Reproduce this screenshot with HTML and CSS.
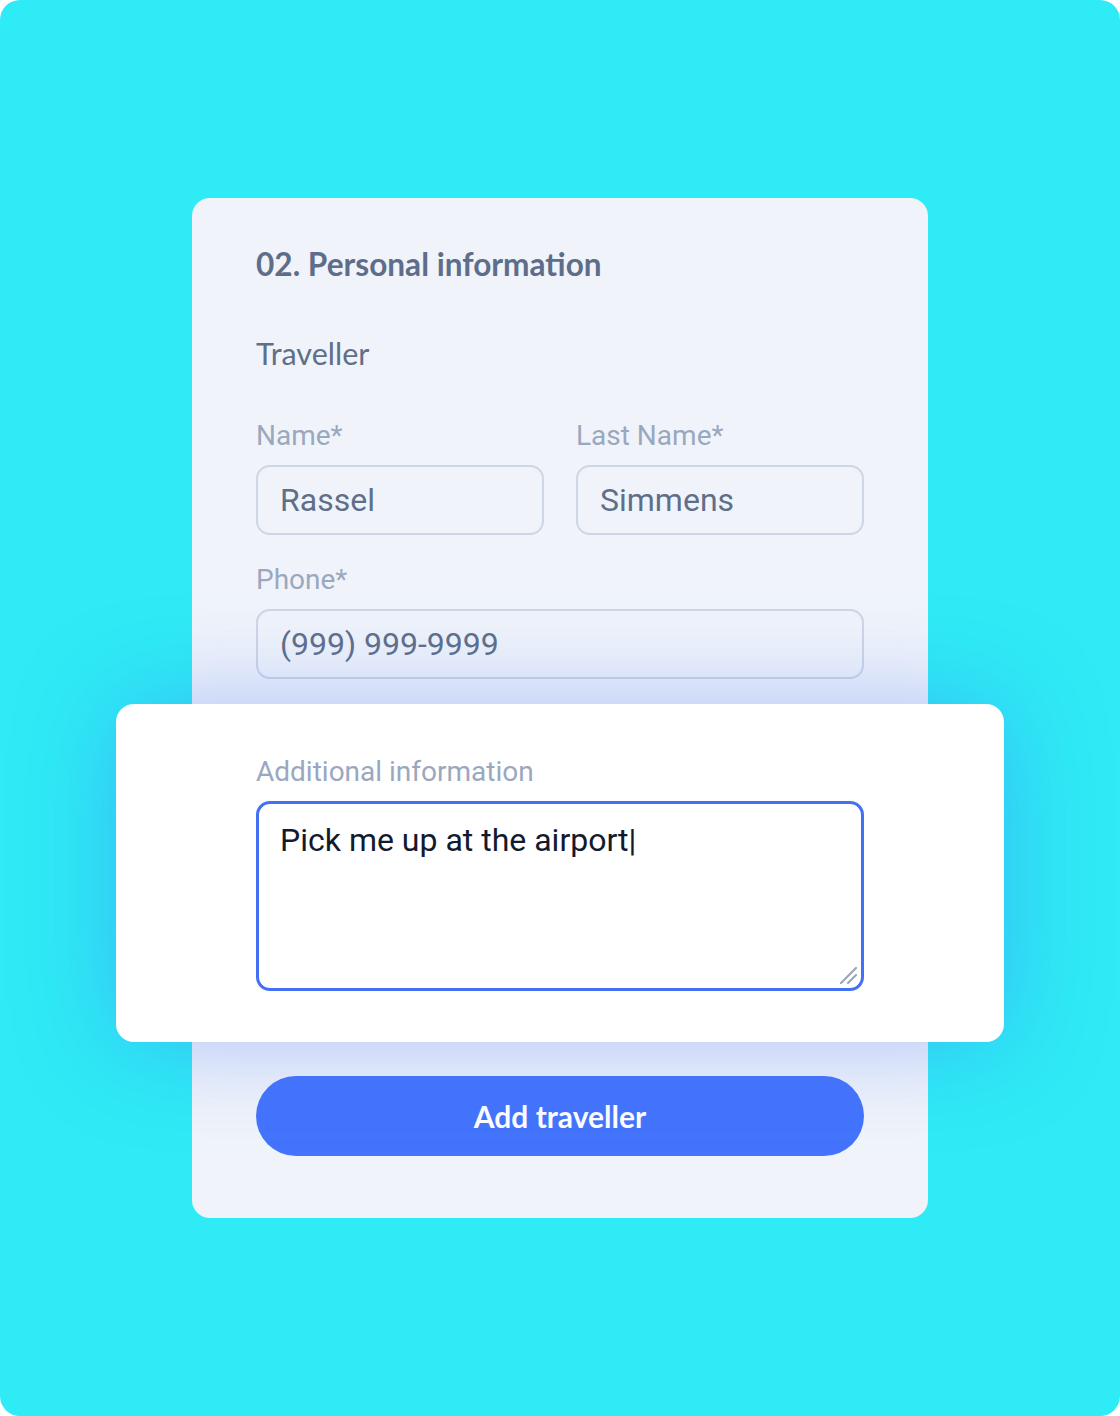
FILE: index.html
```html
<!DOCTYPE html>
<html lang="en">
<head>
<meta charset="utf-8">
<title>Personal information</title>
<link rel="stylesheet" href="styles.css">
</head>
<body>
<div class="stage">
  <form class="card">
    <h2 class="title">02. Personal information</h2>
    <h3 class="subtitle">Traveller</h3>
    <div class="row">
      <label class="field">
        <span class="label">Name*</span>
        <input class="input" type="text" value="Rassel">
      </label>
      <label class="field">
        <span class="label">Last Name*</span>
        <input class="input" type="text" value="Simmens">
      </label>
    </div>
    <label class="field field-phone">
      <span class="label">Phone*</span>
      <input class="input" type="text" value="(999) 999-9999">
    </label>
    <div class="focus-panel">
      <label class="field">
        <span class="label">Additional information</span>
        <span class="textarea-wrap">
          <textarea class="textarea">Pick me up at the airport|</textarea>
          <svg class="grip" width="20" height="20" viewBox="0 0 20 20" aria-hidden="true">
            <line x1="3" y1="18" x2="18" y2="3" stroke="#9aa6b8" stroke-width="2.2" stroke-linecap="round"/>
            <line x1="10" y1="18" x2="18" y2="10" stroke="#9aa6b8" stroke-width="2.2" stroke-linecap="round"/>
          </svg>
        </span>
      </label>
    </div>
    <button class="btn" type="button">Add traveller</button>
  </form>
</div>
</body>
</html>
```
FILE: styles.css
```css
* { box-sizing: border-box; }
html, body { margin: 0; padding: 0; background: #ffffff; }
.stage {
  width: 1120px;
  height: 1416px;
  background: #2eebf5;
  border-radius: 20px;
  display: flex;
  align-items: center;
  justify-content: center;
}
.card {
  width: 736px;
  height: 1020px;
  background: #f0f4fa;
  border-radius: 18px;
  padding: 46px 64px 62px;
  display: flex;
  flex-direction: column;
}
.title {
  margin: 0;
  font-family: Lato, "Open Sans", sans-serif;
  font-weight: 700;
  font-size: 31.6px;
  line-height: 40px;
  color: #5e6e8a;
}
.subtitle {
  margin: 51px 0 0;
  font-family: Lato, "Open Sans", sans-serif;
  font-weight: 400;
  font-size: 30.5px;
  line-height: 36px;
  color: #5f6f89;
}
.row {
  margin-top: 50px;
  display: grid;
  grid-template-columns: 1fr 1fr;
  gap: 32px;
}
.field {
  display: flex;
  flex-direction: column;
  gap: 14px;
}
.field-phone { margin-top: 30px; }
.label {
  font-family: Roboto, "Liberation Sans", sans-serif;
  font-size: 28px;
  line-height: 30px;
  color: #9aa8bf;
}
.input {
  height: 70px;
  width: 100%;
  border: 2px solid #cdd6e4;
  border-radius: 14px;
  background: transparent;
  padding: 0 22px;
  font-family: Roboto, "Liberation Sans", sans-serif;
  font-size: 32px;
  color: #5f6f89;
  outline: none;
}
.focus-panel {
  position: relative;
  margin: 25px -140px 0;
  background: #ffffff;
  border-radius: 18px;
  padding: 53px 140px 51px;
  box-shadow: 0 0 100px rgba(68, 112, 245, 0.4);
}
.textarea-wrap {
  position: relative;
  display: block;
  height: 190px;
}
.textarea {
  display: block;
  height: 190px;
  width: 100%;
  border: 3px solid #4470f5;
  border-radius: 14px;
  padding: 16px 21px;
  font-family: Roboto, "Liberation Sans", sans-serif;
  font-size: 32px;
  line-height: 40px;
  color: #121a2e;
  background: #ffffff;
  outline: none;
  resize: none;
}
.grip {
  position: absolute;
  right: 6px;
  bottom: 6px;
}
.btn {
  margin-top: 34px;
  height: 80px;
  width: 100%;
  border: none;
  border-radius: 40px;
  background: #4474fc;
  color: #ffffff;
  font-family: Lato, "Open Sans", sans-serif;
  font-weight: 700;
  font-size: 30px;
  cursor: pointer;
}
```
